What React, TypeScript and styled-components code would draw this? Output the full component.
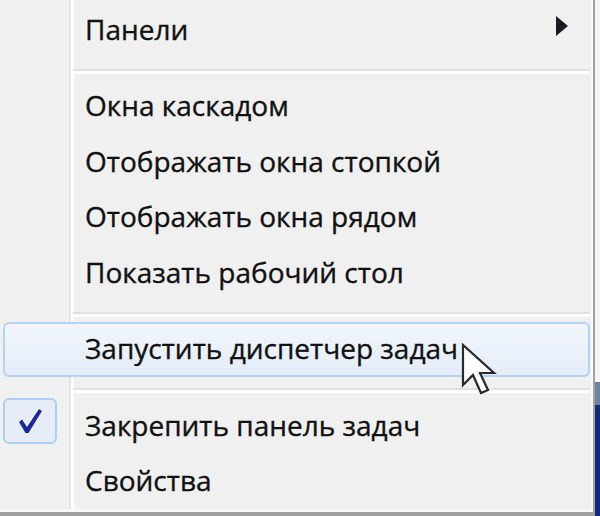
import React from "react";
import styled, { createGlobalStyle } from "styled-components";

const Global = createGlobalStyle`
  html, body { margin: 0; padding: 0; }
  body { background: #10307a; width: 600px; height: 516px; overflow: hidden; }
`;

const Page = styled.div`
  width: 600px;
  height: 516px;
  display: flex;
  align-items: flex-start;
  background: linear-gradient(
    #f6f6f6 0,
    #f6f6f6 382px,
    #6f82a6 382px,
    #6f82a6 405px,
    #0f2d78 405px
  );
  position: relative;
  overflow: hidden;
`;

const Frame = styled.div`
  border-right: 2px solid #a3a3a3;
  border-bottom: 4px solid #a0a0a0;
  background: #f8f8f8;
  padding-right: 2px;
  padding-bottom: 3px;
`;

const Menu = styled.div`
  width: 591px;
  height: 509px;
  box-sizing: border-box;
  padding: 2px 1px 0 3px;
  display: flex;
  flex-direction: column;
  background:
    linear-gradient(
      to right,
      transparent 69px,
      #e2e3e3 69px,
      #e2e3e3 71px,
      #ffffff 71px,
      #ffffff 74px,
      transparent 74px
    ),
    #f0f0f0;
  font-family: "Open Sans", "Noto Sans", sans-serif;
  font-size: 28px;
  color: #111;
`;

const Item = styled.div<{ $active?: boolean }>`
  height: 55.5px;
  flex: none;
  box-sizing: border-box;
  border-radius: 6px;
  box-shadow: ${(p) => (p.$active ? "inset 0 0 0 2px #b3d3f6" : "none")};
  background: ${(p) =>
    p.$active ? "linear-gradient(#f2f6fc, #e4ecf8)" : "transparent"};
  display: grid;
  grid-template-columns: 54px 1fr auto;
  column-gap: 28px;
  align-items: center;
  padding: 0 22px 2px 0;
  white-space: nowrap;
`;

const Gutter = styled.div`
  align-self: stretch;
  display: flex;
  align-items: flex-start;
`;

const Label = styled.span`
  line-height: 1;
  -webkit-text-stroke: 0.35px #111;
`;

const Separator = styled.div`
  flex: none;
  margin: 11px 0 5px 70px;
  height: 2px;
  background: #e0e0e0;
  border-bottom: 3px solid #ffffff;
`;

const CheckBox = styled.div`
  width: 54px;
  height: 46px;
  box-sizing: border-box;
  border: 2px solid #aacef6;
  border-radius: 6px;
  background: #e6edf9;
  display: flex;
  align-items: center;
  justify-content: center;
`;

const SubArrow = styled.svg`
  width: 12px;
  height: 20px;
  margin-bottom: 6px;
`;

const Cursor = styled.svg`
  position: absolute;
  left: 461px;
  top: 343px;
  width: 36px;
  height: 54px;
`;

type Entry =
  | { kind: "item"; text: string; sub?: boolean; active?: boolean; checked?: boolean }
  | { kind: "sep" };

const entries: Entry[] = [
  { kind: "item", text: "Панели", sub: true },
  { kind: "sep" },
  { kind: "item", text: "Окна каскадом" },
  { kind: "item", text: "Отображать окна стопкой" },
  { kind: "item", text: "Отображать окна рядом" },
  { kind: "item", text: "Показать рабочий стол" },
  { kind: "sep" },
  { kind: "item", text: "Запустить диспетчер задач", active: true },
  { kind: "sep" },
  { kind: "item", text: "Закрепить панель задач", checked: true },
  { kind: "item", text: "Свойства" },
];

export default function App() {
  return (
    <>
      <Global />
      <Page>
        <Frame>
          <Menu>
            {entries.map((e, i) =>
              e.kind === "sep" ? (
                <Separator key={i} />
              ) : (
                <Item key={i} $active={e.active}>
                  <Gutter>
                    {e.checked && (
                      <CheckBox>
                        <svg width="28" height="30" viewBox="0 0 28 30">
                          <path
                            d="M3 16 L6 13.5 L11 21 L23 3 L26 5 L12.5 27 L9.5 27 Z"
                            fill="#1b2796"
                          />
                        </svg>
                      </CheckBox>
                    )}
                  </Gutter>
                  <Label>{e.text}</Label>
                  {e.sub ? (
                    <SubArrow viewBox="0 0 12 20">
                      <path d="M0 0 L12 10 L0 20 Z" fill="#1a1a22" />
                    </SubArrow>
                  ) : (
                    <span />
                  )}
                </Item>
              )
            )}
          </Menu>
        </Frame>
        <Cursor viewBox="0 0 36 54">
          <path
            d="M2 2 L2 42 L12 32 L20 50 L27 47 L19 30 L33 30 Z"
            fill="#ffffff"
            stroke="#2a2a2a"
            strokeWidth="2.2"
            strokeLinejoin="miter"
          />
        </Cursor>
      </Page>
    </>
  );
}
